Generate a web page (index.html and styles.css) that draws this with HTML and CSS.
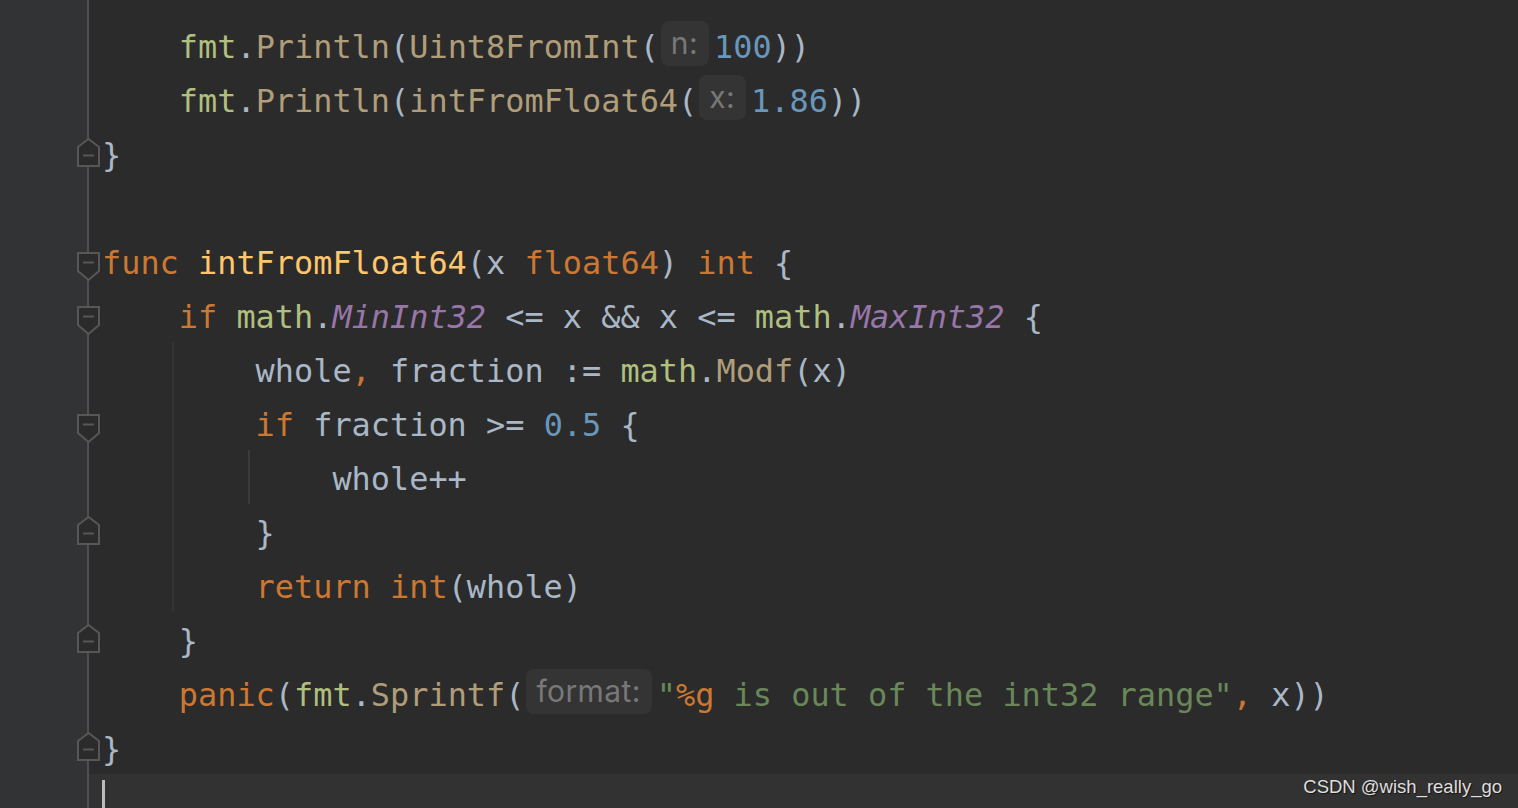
FILE: index.html
```html
<!DOCTYPE html>
<html>
<head>
<meta charset="utf-8">
<link rel="stylesheet" href="styles.css">
</head>
<body>
<div class="editor">
  <div class="gutter">
    <div class="gl"></div>
    <div class="gl"></div>
    <div class="gl"><svg class="fold up" viewBox="0 0 23 30" width="23" height="30"><path d="M1 9 L11.5 1 L22 9 V28 H1 Z"/><path class="minus" d="M6 17.5 H17"/></svg></div>
    <div class="gl"></div>
    <div class="gl"><svg class="fold down" viewBox="0 0 23 30" width="23" height="30"><path d="M1 1 H22 V19 L11.5 28 L1 19 Z"/><path class="minus" d="M6 10.5 H17"/></svg></div>
    <div class="gl"><svg class="fold down" viewBox="0 0 23 30" width="23" height="30"><path d="M1 1 H22 V19 L11.5 28 L1 19 Z"/><path class="minus" d="M6 10.5 H17"/></svg></div>
    <div class="gl"></div>
    <div class="gl"><svg class="fold down" viewBox="0 0 23 30" width="23" height="30"><path d="M1 1 H22 V19 L11.5 28 L1 19 Z"/><path class="minus" d="M6 10.5 H17"/></svg></div>
    <div class="gl"></div>
    <div class="gl"><svg class="fold up" viewBox="0 0 23 30" width="23" height="30"><path d="M1 9 L11.5 1 L22 9 V28 H1 Z"/><path class="minus" d="M6 17.5 H17"/></svg></div>
    <div class="gl"></div>
    <div class="gl"><svg class="fold up" viewBox="0 0 23 30" width="23" height="30"><path d="M1 9 L11.5 1 L22 9 V28 H1 Z"/><path class="minus" d="M6 17.5 H17"/></svg></div>
    <div class="gl"></div>
    <div class="gl"><svg class="fold up" viewBox="0 0 23 30" width="23" height="30"><path d="M1 9 L11.5 1 L22 9 V28 H1 Z"/><path class="minus" d="M6 17.5 H17"/></svg></div>
    <div class="gl"></div>
  </div>
  <div class="code">
    <div class="ln">    <span class="pkg">fmt</span>.<span class="fn">Println</span>(<span class="fn">Uint8FromInt</span>(<span class="hint">n:</span><span class="num">100</span>))</div>
    <div class="ln">    <span class="pkg">fmt</span>.<span class="fn">Println</span>(<span class="fn">intFromFloat64</span>(<span class="hint">x:</span><span class="num">1.86</span>))</div>
    <div class="ln">}</div>
    <div class="ln"></div>
    <div class="ln"><span class="kw">func</span> <span class="decl">intFromFloat64</span>(x <span class="kw">float64</span>) <span class="kw">int</span> {</div>
    <div class="ln">    <span class="kw">if</span> <span class="pkg">math</span>.<span class="const">MinInt32</span> &lt;= x &amp;&amp; x &lt;= <span class="pkg">math</span>.<span class="const">MaxInt32</span> {</div>
    <div class="ln g1">        whole<span class="kw">,</span> fraction := <span class="pkg">math</span>.<span class="fn">Modf</span>(x)</div>
    <div class="ln g1">        <span class="kw">if</span> fraction &gt;= <span class="num">0.5</span> {</div>
    <div class="ln g2">            whole++</div>
    <div class="ln g1">        }</div>
    <div class="ln g1">        <span class="kw">return</span> <span class="kw">int</span>(whole)</div>
    <div class="ln">    }</div>
    <div class="ln">    <span class="kw">panic</span>(<span class="pkg">fmt</span>.<span class="fn">Sprintf</span>(<span class="hint">format:</span><span class="str">"<span class="kw">%g</span> is out of the int32 range"</span><span class="kw">,</span> x))</div>
    <div class="ln">}</div>
    <div class="ln current"><span class="caret"></span></div>
  </div>
</div>
<div class="watermark">CSDN @wish_really_go</div>
</body>
</html>
```

FILE: styles.css
```css
html, body {
  margin: 0;
  padding: 0;
  background: #2b2b2b;
}

.editor {
  display: flex;
  height: 808px;
  overflow: hidden;
  background: #2b2b2b;
}

.gutter {
  flex: 0 0 87px;
  background: #313335;
  border-right: 2px solid #4f4f4f;
  padding-top: 18px;
}

.gl {
  position: relative;
  height: 54px;
}

.fold {
  position: absolute;
  left: 77px;
  fill: #2b2b2b;
  stroke: #575757;
  stroke-width: 2;
  z-index: 2;
}

.fold .minus {
  fill: none;
}

.fold.up {
  top: 12px;
}

.fold.down {
  top: 18px;
}

.code {
  flex: 1;
  padding-top: 18px;
  font-family: "DejaVu Sans Mono", monospace;
  font-size: 31.9px;
  color: #a9b7c6;
}

.ln {
  height: 54px;
  line-height: 54px;
  padding-left: 13px;
  padding-top: 2px;
  box-sizing: border-box;
  white-space: pre;
}

.g1 {
  background: linear-gradient(#343434, #343434) no-repeat 83px 0 / 2px 100%;
}

.g2 {
  background:
    linear-gradient(#3b3b3b, #3b3b3b) no-repeat 159px 0 / 2px 100%,
    linear-gradient(#343434, #343434) no-repeat 83px 0 / 2px 100%;
}

.current {
  background: #323232;
  padding-top: 0;
}

.caret {
  display: inline-block;
  vertical-align: top;
  width: 3px;
  height: 44px;
  margin-top: 6px;
  margin-left: 0;
  background: #bbbbbb;
}

.kw { color: #cc7832; }
.decl { color: #ffc66d; }
.pkg { color: #afbf7e; }
.fn { color: #b09d79; }
.const { color: #9876aa; font-style: italic; }
.num { color: #6897bb; }
.str { color: #6a8759; }

.hint {
  display: inline-block;
  vertical-align: top;
  box-sizing: border-box;
  height: 45px;
  margin: 1px 5px 0 2px;
  padding: 0 11px 0 10px;
  border-radius: 8px;
  background: #343434;
  color: #787878;
  font-family: "Inter", "Liberation Sans", sans-serif;
  font-size: 30px;
  letter-spacing: 0.4px;
  line-height: 45px;
  font-style: normal;
}

.watermark {
  position: absolute;
  top: 778px;
  right: 16px;
  font-family: "Liberation Sans", Arial, sans-serif;
  font-size: 18.5px;
  line-height: 18.5px;
  color: #dedede;
  text-shadow: 1px 1px 1px rgba(0, 0, 0, 0.6);
}
```
